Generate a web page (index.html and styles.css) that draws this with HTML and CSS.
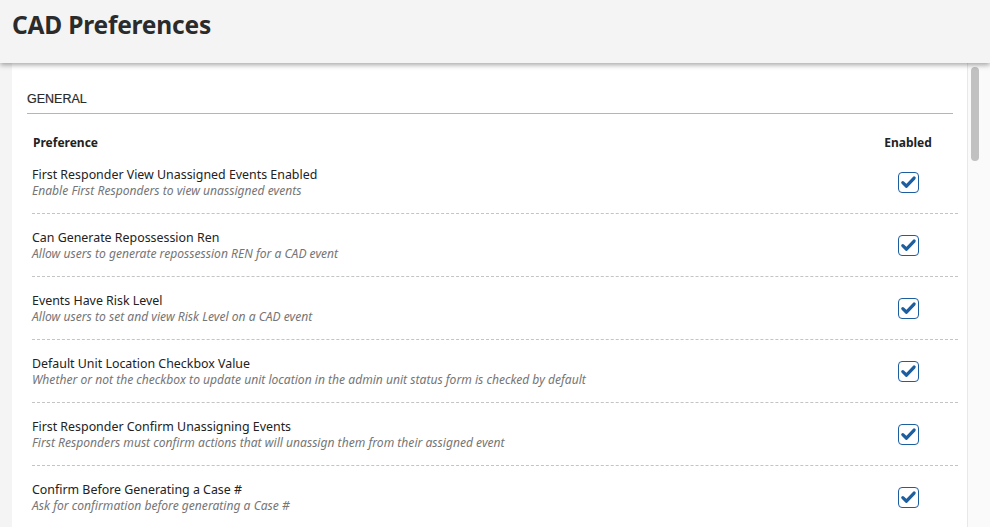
FILE: index.html
```html
<!DOCTYPE html>
<html lang="en">
<head>
    <meta charset="UTF-8">
    <meta name="viewport" content="width=device-width, initial-scale=1.0">
    <title>CAD Preferences</title>
    <link rel="stylesheet" href="styles.css">
</head>
<body>

<div class="header">
    <h1>CAD Preferences</h1>
</div>

<div class="main">
    <div class="panel">
        <div class="section-title">GENERAL</div>

        <div class="table-head">
            <span>Preference</span>
            <span class="col-enabled">Enabled</span>
        </div>

        <div class="pref-row">
            <div class="pref-text">
                <div class="pref-name">First Responder View Unassigned Events Enabled</div>
                <div class="pref-desc">Enable First Responders to view unassigned events</div>
            </div>
            <div class="col-enabled"><span class="check"><svg viewBox="0 0 20 20"><path d="M4 10.2l3.9 3.7 8-8.6"/></svg></span></div>
        </div>

        <div class="pref-row">
            <div class="pref-text">
                <div class="pref-name">Can Generate Repossession Ren</div>
                <div class="pref-desc">Allow users to generate repossession REN for a CAD event</div>
            </div>
            <div class="col-enabled"><span class="check"><svg viewBox="0 0 20 20"><path d="M4 10.2l3.9 3.7 8-8.6"/></svg></span></div>
        </div>

        <div class="pref-row">
            <div class="pref-text">
                <div class="pref-name">Events Have Risk Level</div>
                <div class="pref-desc">Allow users to set and view Risk Level on a CAD event</div>
            </div>
            <div class="col-enabled"><span class="check"><svg viewBox="0 0 20 20"><path d="M4 10.2l3.9 3.7 8-8.6"/></svg></span></div>
        </div>

        <div class="pref-row">
            <div class="pref-text">
                <div class="pref-name">Default Unit Location Checkbox Value</div>
                <div class="pref-desc">Whether or not the checkbox to update unit location in the admin unit status form is checked by default</div>
            </div>
            <div class="col-enabled"><span class="check"><svg viewBox="0 0 20 20"><path d="M4 10.2l3.9 3.7 8-8.6"/></svg></span></div>
        </div>

        <div class="pref-row">
            <div class="pref-text">
                <div class="pref-name">First Responder Confirm Unassigning Events</div>
                <div class="pref-desc">First Responders must confirm actions that will unassign them from their assigned event</div>
            </div>
            <div class="col-enabled"><span class="check"><svg viewBox="0 0 20 20"><path d="M4 10.2l3.9 3.7 8-8.6"/></svg></span></div>
        </div>

        <div class="pref-row">
            <div class="pref-text">
                <div class="pref-name">Confirm Before Generating a Case #</div>
                <div class="pref-desc">Ask for confirmation before generating a Case #</div>
            </div>
            <div class="col-enabled"><span class="check"><svg viewBox="0 0 20 20"><path d="M4 10.2l3.9 3.7 8-8.6"/></svg></span></div>
        </div>
    </div>

    <div class="scrollbar">
        <div class="thumb"></div>
    </div>
</div>

</body>
</html>
```

FILE: styles.css
```css
html, body {
    height: 100%;
}

body {
    margin: 0;
    font-family: "Noto Sans", "Open Sans", sans-serif;
    background-color: #f4f4f4;
    color: #222;
    overflow: hidden;
    display: flex;
    flex-direction: column;
}

.header {
    height: 63px;
    flex: none;
    background-color: #f4f4f4;
    box-shadow: 0 2px 5px rgba(0, 0, 0, 0.35);
    position: relative;
    z-index: 2;
    padding-left: 12px;
    box-sizing: border-box;
}

.header h1 {
    margin: 0;
    padding-top: 8px;
    font-size: 24.5px;
    font-weight: 700;
    color: #2b2b2b;
    letter-spacing: -0.2px;
}

.main {
    flex: 1;
    display: flex;
    padding-left: 12px;
    min-height: 0;
}

.panel {
    flex: 1;
    background-color: #fff;
    padding: 29px 14px 0 15px;
}

.section-title {
    font-family: "Liberation Sans", Arial, sans-serif;
    font-size: 12.5px;
    color: #2a2a2a;
    padding-bottom: 7px;
    border-bottom: 1px solid #b5b5b5;
    -webkit-text-stroke: 0.2px #2a2a2a;
}

.table-head {
    display: flex;
    justify-content: space-between;
    align-items: center;
    font-size: 12px;
    font-weight: 700;
    color: #222;
    padding: 19px 0 0 1px;
    height: 18px;
    margin: 0 -5px 0 5px;
}

.col-enabled {
    width: 100px;
    display: flex;
    justify-content: center;
    flex: none;
}

.pref-row {
    display: flex;
    justify-content: space-between;
    align-items: center;
    margin: 0 -5px 0 5px;
    height: 63px;
    padding-top: 1px;
    border-bottom: 1px dashed #c4c4c4;
    box-sizing: border-box;
}

.pref-name {
    font-size: 12.4px;
    color: #222;
    line-height: 16px;
}

.pref-desc {
    font-size: 12.1px;
    font-style: italic;
    color: #757575;
    line-height: 16px;
}

.check {
    width: 19px;
    height: 19px;
    border: 1.5px solid #1d5e9f;
    border-radius: 4px;
    display: flex;
    align-items: center;
    justify-content: center;
}

.check svg {
    width: 19px;
    height: 19px;
    fill: none;
    stroke: #1d5e9f;
    stroke-width: 3.4;
    stroke-linecap: round;
    stroke-linejoin: round;
}

.scrollbar {
    width: 23px;
    flex: none;
    background-color: #fafafa;
    border-left: 1px solid #e8e8e8;
    padding: 4px 0 0 3px;
    box-sizing: border-box;
}

.scrollbar .thumb {
    width: 8px;
    height: 94px;
    background-color: #c1c1c1;
    border-radius: 4px;
}
```
